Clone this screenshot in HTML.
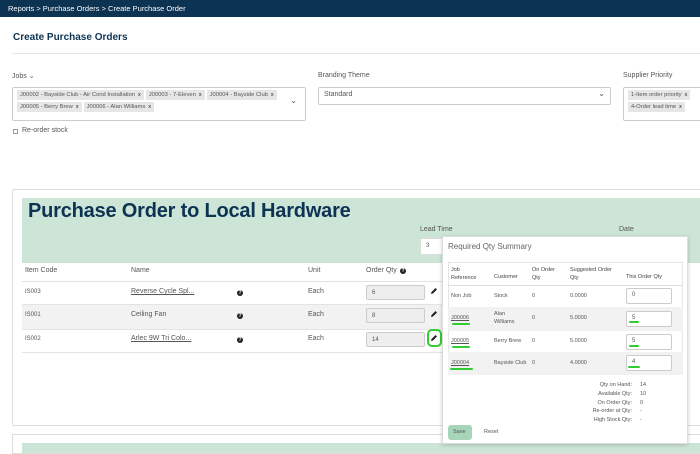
<!DOCTYPE html>
<html><head><meta charset="utf-8"><style>
*{box-sizing:border-box;margin:0;padding:0}
body{width:700px;height:447px;overflow:hidden;background:#fff;font-family:"Liberation Sans",sans-serif;color:#555;position:relative;font-size:7px}
.a{position:absolute}
.bar{left:0;top:0;width:700px;height:17px;background:#0d3352;color:#fff;font-size:7.5px;padding:4px 0 0 8px}
.tag{display:inline-block;background:#e6e6e6;font-size:5.8px;padding:2px 3px;margin:1px 0;color:#555}
.tag b{font-weight:bold;font-size:5px;margin-left:3px}
.box{border:1px solid #ccc;border-radius:2px;background:#fff}
.nav{color:#0d3352}
.row{left:22px;width:430px;border-top:1px solid #e3e3e3}
.inp{border:1px solid #ccc;background:#eee;border-radius:2px;font-size:6px;padding:4px 0 0 5px}
.pinp{border:1px solid #ccc;background:#fff;border-radius:2px;font-size:6px;padding:3px 0 0 5px;width:46px;height:16px}
.g{height:2px;background:#3c3;border-radius:1px}
.q{width:6px;height:6px;border-radius:50%;background:#222;color:#fff;font-size:5px;text-align:center;line-height:6px;font-weight:bold}
</style></head><body>
<div class="a bar">Reports &gt; Purchase Orders &gt; Create Purchase Order</div>
<div class="a nav" style="left:13px;top:32px;font-size:10px;font-weight:bold">Create Purchase Orders</div>
<div class="a" style="left:12px;top:53px;width:688px;height:1px;background:#e5e5e5"></div>
<div class="a" style="left:12px;top:72px;font-size:7px">Jobs &#8964;</div>
<div class="a box" style="left:12px;top:87px;width:294px;height:34px;padding:1px 4px">
<span class="tag">J00002 - Bayside Club - Air Cond Installation<b>x</b></span> <span class="tag">J00003 - 7-Eleven<b>x</b></span> <span class="tag">J00004 - Bayside Club<b>x</b></span><br><span class="tag">J00005 - Berry Brew<b>x</b></span> <span class="tag">J00006 - Alan Williams<b>x</b></span>
<span class="a" style="right:8px;top:8px;font-size:8px">&#8964;</span></div>
<div class="a" style="left:318px;top:72px">Branding Theme</div>
<div class="a box" style="left:318px;top:87px;width:293px;height:18px;padding:3px 5px">Standard<span class="a" style="right:5px;top:1px;font-size:8px">&#8964;</span></div>
<div class="a" style="left:623px;top:72px">Supplier Priority</div>
<div class="a box" style="left:623px;top:87px;width:90px;height:34px;padding:1px 4px">
<span class="tag">1-Item order priority<b>x</b></span><br><span class="tag">4-Order lead time<b>x</b></span></div>
<div class="a" style="left:13px;top:129px;width:5px;height:5px;border:1px solid #999"></div>
<div class="a" style="left:22px;top:127px">Re-order stock</div>

<div class="a" style="left:12px;top:189px;width:700px;height:237px;border:1px solid #ddd;border-radius:2px"></div>
<div class="a" style="left:22px;top:198px;width:690px;height:65px;background:#cde5d6"></div>
<div class="a nav" style="left:28px;top:200px;font-size:20px;font-weight:bold;letter-spacing:-0.2px">Purchase Order to Local Hardware</div>
<div class="a" style="left:420px;top:226px">Lead Time</div>
<div class="a" style="left:619px;top:226px">Date</div>
<div class="a" style="left:420px;top:238px;width:25px;height:17px;background:#fff;border:1px solid #ddd;padding:4px 5px;font-size:6px">3</div>
<div class="a" style="left:25px;top:267px">Item Code</div>
<div class="a" style="left:131px;top:267px">Name</div>
<div class="a" style="left:308px;top:267px">Unit</div>
<div class="a" style="left:366px;top:267px">Order Qty</div>
<div class="a q" style="left:400px;top:268px">?</div>
<div class="a row" style="top:281px;height:23px"></div>
<div class="a row" style="top:304px;height:25px;background:#f2f2f2"></div>
<div class="a row" style="top:329px;height:24px;border-bottom:1px solid #e3e3e3"></div>
<div class="a" style="left:25px;top:289px;font-size:6px">IS003</div>
<div class="a" style="left:25px;top:312px;font-size:6px">IS001</div>
<div class="a" style="left:25px;top:336px;font-size:6px">IS002</div>
<div class="a" style="left:131px;top:288px;text-decoration:underline">Reverse Cycle Spl...</div>
<div class="a" style="left:131px;top:311px">Ceiling Fan</div>
<div class="a" style="left:131px;top:335px;text-decoration:underline">Arlec 9W Tri Colo...</div>
<div class="a q" style="left:237px;top:290px">?</div>
<div class="a q" style="left:237px;top:313px">?</div>
<div class="a q" style="left:237px;top:337px">?</div>
<div class="a" style="left:308px;top:288px">Each</div>
<div class="a" style="left:308px;top:311px">Each</div>
<div class="a" style="left:308px;top:335px">Each</div>
<div class="a inp" style="left:366px;top:285px;width:59px;height:15px">6</div>
<div class="a inp" style="left:366px;top:308px;width:59px;height:15px">8</div>
<div class="a inp" style="left:366px;top:332px;width:59px;height:15px">14</div>
<svg class="a" style="left:430px;top:287px" width="8" height="8" viewBox="0 0 8 8"><path d="M1 7 L1.5 5 L5.5 1 L7 2.5 L3 6.5 Z" fill="#222"/></svg>
<svg class="a" style="left:430px;top:310px" width="8" height="8" viewBox="0 0 8 8"><path d="M1 7 L1.5 5 L5.5 1 L7 2.5 L3 6.5 Z" fill="#222"/></svg>
<svg class="a" style="left:430px;top:334px" width="8" height="8" viewBox="0 0 8 8"><path d="M1 7 L1.5 5 L5.5 1 L7 2.5 L3 6.5 Z" fill="#222"/></svg>
<div class="a" style="left:427px;top:329px;width:15px;height:18px;border:2px solid #3c3;border-radius:5px"></div>

<div class="a" style="left:12px;top:434px;width:700px;height:20px;border:1px solid #ddd"></div>
<div class="a" style="left:22px;top:443px;width:690px;height:10px;background:#cde5d6"></div>

<div class="a" style="left:442px;top:236px;width:246px;height:208px;background:#fff;border:1px solid #ddd;box-shadow:0 1px 4px rgba(0,0,0,.2)"></div>
<div class="a" style="left:448px;top:242px;font-size:8px;color:#666">Required Qty Summary</div>
<div class="a" style="left:448px;top:262px;width:235px;height:113px;border:1px solid #e5e5e5"></div>
<div class="a" style="left:448px;top:307px;width:235px;height:24px;background:#f2f2f2"></div>
<div class="a" style="left:448px;top:352px;width:235px;height:23px;background:#f2f2f2"></div>
<div class="a" style="left:448px;top:285px;width:235px;height:1px;background:#ddd"></div>
<div class="a" style="left:451px;top:266px;font-size:5.5px;line-height:8px;color:#444">Job<br>Reference</div>
<div class="a" style="left:494px;top:274px;font-size:5.5px;color:#444">Customer</div>
<div class="a" style="left:532px;top:266px;font-size:5.5px;line-height:8px;color:#444">On Order<br>Qty</div>
<div class="a" style="left:570px;top:266px;font-size:5.5px;line-height:8px;color:#444">Suggested Order<br>Qty</div>
<div class="a" style="left:626px;top:274px;font-size:5.5px;color:#444">This Order Qty</div>
<div class="a" style="left:451px;top:293px;font-size:5.5px">Non Job</div>
<div class="a" style="left:451px;top:315px;font-size:5.5px;text-decoration:underline">J00006</div>
<div class="a" style="left:451px;top:338px;font-size:5.5px;text-decoration:underline">J00005</div>
<div class="a" style="left:451px;top:360px;font-size:5.5px;text-decoration:underline">J00004</div>
<div class="a g" style="left:452px;top:323px;width:18px"></div>
<div class="a g" style="left:452px;top:346px;width:18px"></div>
<div class="a g" style="left:450px;top:368px;width:23px"></div>
<div class="a" style="left:494px;top:293px;font-size:5.5px">Stock</div>
<div class="a" style="left:494px;top:310px;font-size:5.5px;line-height:8px">Alan<br>Williams</div>
<div class="a" style="left:494px;top:338px;font-size:5.5px">Berry Brew</div>
<div class="a" style="left:494px;top:360px;font-size:5.5px">Bayside Club</div>
<div class="a" style="left:532px;top:293px;font-size:5.5px">0</div>
<div class="a" style="left:532px;top:315px;font-size:5.5px">0</div>
<div class="a" style="left:532px;top:338px;font-size:5.5px">0</div>
<div class="a" style="left:532px;top:360px;font-size:5.5px">0</div>
<div class="a" style="left:570px;top:293px;font-size:5.5px">0.0000</div>
<div class="a" style="left:570px;top:315px;font-size:5.5px">5.0000</div>
<div class="a" style="left:570px;top:338px;font-size:5.5px">5.0000</div>
<div class="a" style="left:570px;top:360px;font-size:5.5px">4.0000</div>
<div class="a pinp" style="left:626px;top:288px">0</div>
<div class="a pinp" style="left:626px;top:311px">5</div>
<div class="a pinp" style="left:626px;top:334px">5</div>
<div class="a pinp" style="left:626px;top:355px">4</div>
<div class="a g" style="left:629px;top:321px;width:10px"></div>
<div class="a g" style="left:629px;top:345px;width:10px"></div>
<div class="a g" style="left:628px;top:366px;width:12px"></div>
<div class="a" style="left:560px;top:381px;width:72px;text-align:right;font-size:5.5px;line-height:8.8px">Qty on Hand:<br>Available Qty:<br>On Order Qty:<br>Re-order at Qty:<br>High Stock Qty:</div>
<div class="a" style="left:640px;top:381px;font-size:5.5px;line-height:8.8px">14<br>10<br>0<br>-<br>-</div>
<div class="a" style="left:448px;top:425px;width:24px;height:15px;background:#a8d5b9;border-radius:3px;font-size:5.5px;padding:4px 0 0 5px;color:#555">Save</div>
<div class="a" style="left:484px;top:429px;font-size:5.5px">Reset</div>
</body></html>
